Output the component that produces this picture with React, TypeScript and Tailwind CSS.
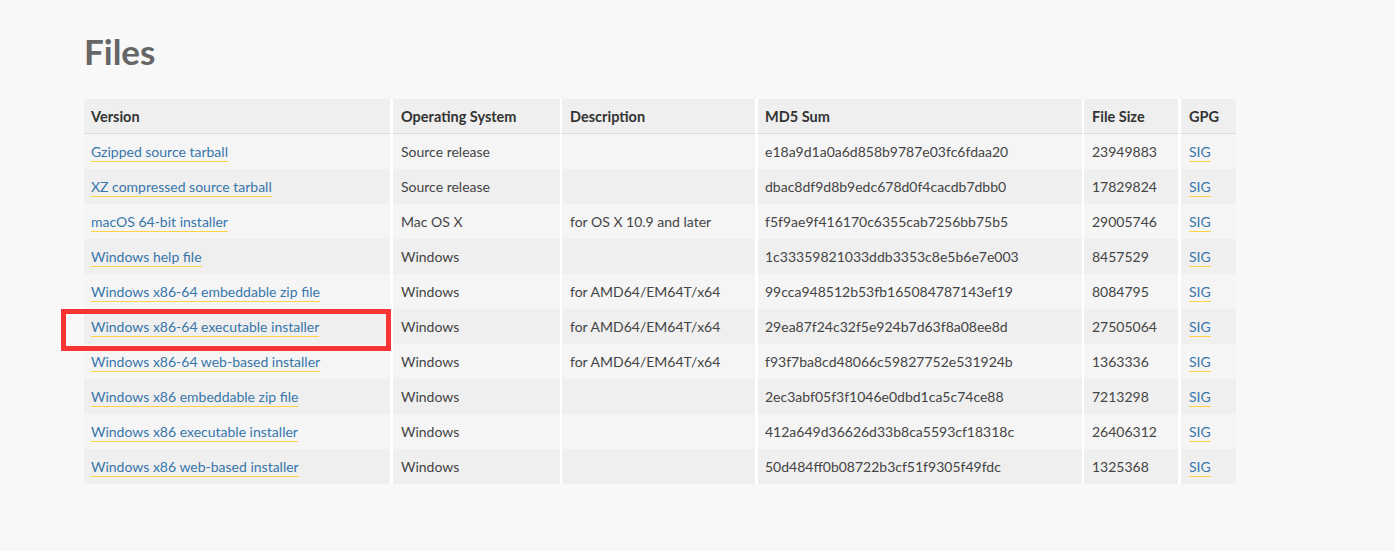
import React from "react";

type Row = { name: string; os: string; desc: string; md5: string; size: string };

const rows: Row[] = [
  { name: "Gzipped source tarball", os: "Source release", desc: "", md5: "e18a9d1a0a6d858b9787e03fc6fdaa20", size: "23949883" },
  { name: "XZ compressed source tarball", os: "Source release", desc: "", md5: "dbac8df9d8b9edc678d0f4cacdb7dbb0", size: "17829824" },
  { name: "macOS 64-bit installer", os: "Mac OS X", desc: "for OS X 10.9 and later", md5: "f5f9ae9f416170c6355cab7256bb75b5", size: "29005746" },
  { name: "Windows help file", os: "Windows", desc: "", md5: "1c33359821033ddb3353c8e5b6e7e003", size: "8457529" },
  { name: "Windows x86-64 embeddable zip file", os: "Windows", desc: "for AMD64/EM64T/x64", md5: "99cca948512b53fb165084787143ef19", size: "8084795" },
  { name: "Windows x86-64 executable installer", os: "Windows", desc: "for AMD64/EM64T/x64", md5: "29ea87f24c32f5e924b7d63f8a08ee8d", size: "27505064" },
  { name: "Windows x86-64 web-based installer", os: "Windows", desc: "for AMD64/EM64T/x64", md5: "f93f7ba8cd48066c59827752e531924b", size: "1363336" },
  { name: "Windows x86 embeddable zip file", os: "Windows", desc: "", md5: "2ec3abf05f3f1046e0dbd1ca5c74ce88", size: "7213298" },
  { name: "Windows x86 executable installer", os: "Windows", desc: "", md5: "412a649d36626d33b8ca5593cf18318c", size: "26406312" },
  { name: "Windows x86 web-based installer", os: "Windows", desc: "", md5: "50d484ff0b08722b3cf51f9305f49fdc", size: "1325368" },
];

const cellCls = [
  "w-[306px] pl-[7px]",
  "w-[170px] pl-[8px] border-l-[3px] border-l-white",
  "w-[195px] pl-[8px] border-l-[2px] border-l-white",
  "w-[327px] pl-[7px] border-l-[3px] border-l-white",
  "w-[96px] pl-[8px] border-l-[2px] border-l-white",
  "w-[58px] pl-[8px] border-l-[3px] border-l-white",
];

const headers = ["Version", "Operating System", "Description", "MD5 Sum", "File Size", "GPG"];

function Link({ children }: { children: React.ReactNode }) {
  return (
    <a href="#" className="text-[#3776ab] border-b border-[#ffd343] pb-[1px]">
      {children}
    </a>
  );
}

export default function App() {
  return (
    <div
      className="min-h-[551px] w-full bg-[#f8f8f8] text-[#444] pl-[84px] pt-[29px]"
      style={{ fontFamily: "Lato, 'Noto Sans', sans-serif" }}
    >
      <h1 className="text-[35px] leading-[44px] font-bold text-[#666] m-0">Files</h1>
      <div className="relative mt-[26px] w-[1152px]">
        <table className="border-separate border-spacing-0 text-[14px] w-[1152px] table-fixed">
          <thead>
            <tr className="bg-[#efefef]">
              {headers.map((h, i) => (
                <th
                  key={h}
                  className={`${cellCls[i]} h-[35px] pt-[1px] text-left font-bold text-[#333] text-[14.5px] border-b border-b-[#dddddd]`}
                >
                  {h}
                </th>
              ))}
            </tr>
          </thead>
          <tbody>
            {rows.map((r, idx) => (
              <tr key={r.name} className={idx % 2 === 0 ? "bg-[#f5f5f5]" : "bg-[#efefef]"}>
                <td className={`${cellCls[0]} h-[35px]`}>
                  <Link>{r.name}</Link>
                </td>
                <td className={cellCls[1]}>{r.os}</td>
                <td className={cellCls[2]}>{r.desc}</td>
                <td className={cellCls[3]}>{r.md5}</td>
                <td className={cellCls[4]}>{r.size}</td>
                <td className={cellCls[5]}>
                  <Link>SIG</Link>
                </td>
              </tr>
            ))}
          </tbody>
        </table>
        <div className="absolute left-[-23px] top-[210px] w-[330px] h-[42px] border-[5px] border-[#fa3434]" />
      </div>
    </div>
  );
}
